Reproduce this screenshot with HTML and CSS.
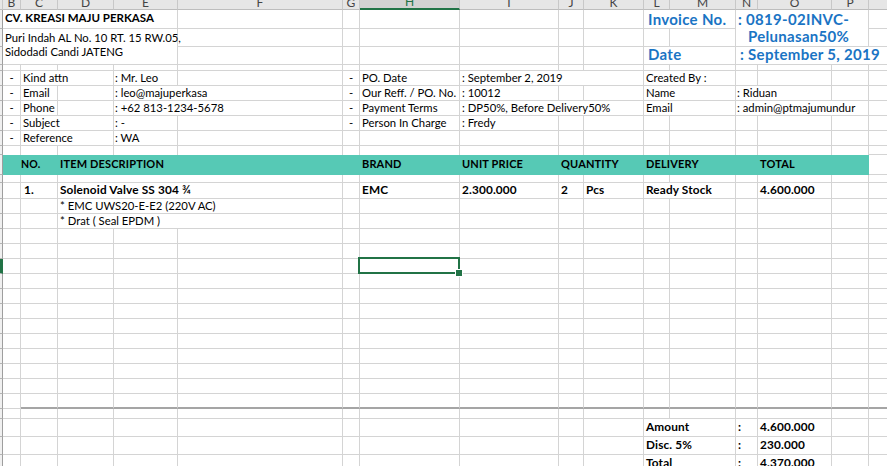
FILE: index.html
```html
<!DOCTYPE html>
<html>
<head>
<meta charset="utf-8">
<link rel="stylesheet" href="styles.css">
</head>
<body>
<div class="sheet">
  <!-- column headers -->
  <i class="h"></i><i class="h">B</i><i class="h">C</i><i class="h">D</i><i class="h">E</i><i class="h">F</i><i class="h">G</i><i class="h hs">H</i><i class="h">I</i><i class="h">J</i><i class="h">K</i><i class="h">L</i><i class="h">M</i><i class="h">N</i><i class="h">O</i><i class="h">P</i><i class="h">Q</i>

  <!-- row 1 -->
  <i class="rh"></i><div class="s4 b co">CV. KREASI MAJU PERKASA</div><i></i><i></i><i></i><i></i><i></i><i></i><div class="s2 bl inv">Invoice No.</div><div class="s3 r2 bl invno"><span>: 0819-02INVC-</span><span class="ind">Pelunasan50%</span></div><i></i>
  <!-- row 2 -->
  <i class="rh"></i><div class="s4 r2 addr"><span>Puri Indah AL No. 10 RT. 15 RW.05,</span><span>Sidodadi Candi JATENG</span></div><i></i><i></i><i></i><i></i><i></i><i></i><i></i><i></i><i></i>
  <!-- row 3 -->
  <i class="rh"></i><i></i><i></i><i></i><i></i><i></i><i></i><div class="s2 bl dt">Date</div><div class="s4 bl dt">: September 5, 2019</div>
  <!-- row 4 -->
  <i class="rh"></i><i></i><i></i><i></i><i></i><i></i><i></i><i></i><i></i><i></i><i></i><i></i><i></i><i></i><i></i><i></i><i></i>
  <!-- row 5 -->
  <i class="rh"></i><div class="c">-</div><div class="s2">Kind attn</div><div class="p1">: Mr. Leo</div><i></i><div class="c">-</div><div>PO. Date</div><div class="s3">: September 2, 2019</div><div class="s2">Created By :</div><i></i><i></i><i></i><i></i>
  <!-- row 6 -->
  <i class="rh"></i><div class="c">-</div><div>Email</div><i></i><div class="s2 p1">: leo@majuperkasa</div><div class="c">-</div><div>Our Reff. / PO. No.</div><div>: 10012</div><i></i><i></i><div class="s2">Name</div><div class="s2 p1">: Riduan</div><i></i><i></i>
  <!-- row 7 -->
  <i class="rh"></i><div class="c">-</div><div>Phone</div><i></i><div class="s2 p1">: +62 813-1234-5678</div><div class="c">-</div><div>Payment Terms</div><div class="s3">: DP50%, Before Delivery50%</div><div class="s2">Email</div><div class="s3 p1">: admin@ptmajumundur</div><i></i>
  <!-- row 8 -->
  <i class="rh"></i><div class="c">-</div><div class="s2">Subject</div><div class="p1">: -</div><i></i><div class="c">-</div><div>Person In Charge</div><div>: Fredy</div><i></i><i></i><i></i><i></i><i></i><i></i><i></i><i></i>
  <!-- row 9 -->
  <i class="rh"></i><div class="c">-</div><div class="s2">Reference</div><div class="p1">: WA</div><i></i><i></i><i></i><i></i><i></i><i></i><i></i><i></i><i></i><i></i><i></i><i></i>
  <!-- row 10 -->
  <i class="rh"></i><i class="nb"></i><i class="nb"></i><i class="nb"></i><i class="nb"></i><i class="nb"></i><i class="nb"></i><i class="nb"></i><i class="nb"></i><i class="nb"></i><i class="nb"></i><i class="nb"></i><i class="nb"></i><i class="nb"></i><i class="nb"></i><i class="nb"></i><i></i>
  <!-- row 11 : table header -->
  <i class="rh"></i><i class="t"></i><div class="t no">NO.</div><div class="t s4">ITEM DESCRIPTION</div><div class="t">BRAND</div><div class="t">UNIT PRICE</div><div class="t s2">QUANTITY</div><div class="t s3">DELIVERY</div><div class="t s2">TOTAL</div><i></i>
  <!-- row 12 -->
  <i class="rh"></i><i></i><i></i><i class="s3"></i><i></i><i></i><i></i><i></i><i></i><i></i><i></i><i></i><i></i><i></i><i></i>
  <!-- row 13 : item -->
  <i class="rh"></i><i></i><div class="b it p3">1.</div><div class="s3 b it">Solenoid Valve SS 304 ¾</div><i></i><div class="b it">EMC</div><div class="b it">2.300.000</div><div class="b it">2</div><div class="b it">Pcs</div><div class="s2 b it">Ready Stock</div><i></i><div class="b it">4.600.000</div><i></i><i></i>
  <!-- row 14 -->
  <i class="rh"></i><i></i><i></i><div class="s3">* EMC UWS20-E-E2 (220V AC)</div><i></i><i></i><i></i><i></i><i></i><i></i><i></i><i></i><i></i><i></i><i></i>
  <!-- row 15 -->
  <i class="rh"></i><i></i><i></i><div class="s3">* Drat ( Seal EPDM )</div><i></i><i></i><i></i><i></i><i></i><i></i><i></i><i></i><i></i><i></i><i></i>
  <!-- row 16 -->
  <i class="rh"></i><i></i><i></i><i></i><i></i><i></i><i></i><i></i><i></i><i></i><i></i><i></i><i></i><i></i><i></i><i></i><i></i>
  <!-- row 17 -->
  <i class="rh"></i><i></i><i></i><i></i><i></i><i></i><i></i><i></i><i></i><i></i><i></i><i></i><i></i><i></i><i></i><i></i><i></i>
  <!-- row 18 : selected cell H -->
  <i class="rh rs"></i><i></i><i></i><i></i><i></i><i></i><i></i><i class="sel"></i><i></i><i></i><i></i><i></i><i></i><i></i><i></i><i></i><i></i>
  <!-- rows 19-26 -->
  <i class="rh"></i><i></i><i></i><i></i><i></i><i></i><i></i><i></i><i></i><i></i><i></i><i></i><i></i><i></i><i></i><i></i><i></i>
  <i class="rh"></i><i></i><i></i><i></i><i></i><i></i><i></i><i></i><i></i><i></i><i></i><i></i><i></i><i></i><i></i><i></i><i></i>
  <i class="rh"></i><i></i><i></i><i></i><i></i><i></i><i></i><i></i><i></i><i></i><i></i><i></i><i></i><i></i><i></i><i></i><i></i>
  <i class="rh"></i><i></i><i></i><i></i><i></i><i></i><i></i><i></i><i></i><i></i><i></i><i></i><i></i><i></i><i></i><i></i><i></i>
  <i class="rh"></i><i></i><i></i><i></i><i></i><i></i><i></i><i></i><i></i><i></i><i></i><i></i><i></i><i></i><i></i><i></i><i></i>
  <i class="rh"></i><i></i><i></i><i></i><i></i><i></i><i></i><i></i><i></i><i></i><i></i><i></i><i></i><i></i><i></i><i></i><i></i>
  <i class="rh"></i><i></i><i></i><i></i><i></i><i></i><i></i><i></i><i></i><i></i><i></i><i></i><i></i><i></i><i></i><i></i><i></i>
  <i class="rh"></i><i></i><i></i><i></i><i></i><i></i><i></i><i></i><i></i><i></i><i></i><i></i><i></i><i></i><i></i><i></i><i></i>
  <!-- row 27 : thick bottom -->
  <i class="rh"></i><i></i><i class="tk"></i><i class="tk"></i><i class="tk"></i><i class="tk"></i><i class="tk"></i><i class="tk"></i><i class="tk"></i><i class="tk"></i><i class="tk"></i><i class="tk"></i><i class="tk"></i><i class="tk"></i><i class="tk"></i><i class="tk"></i><i class="tk"></i>
  <!-- row 28 -->
  <i class="rh"></i><i></i><i></i><i></i><i></i><i></i><i></i><i></i><i></i><i></i><i></i><i></i><i></i><i></i><i></i><i></i><i></i>
  <!-- totals -->
  <i class="rh"></i><i></i><i></i><i></i><i></i><i></i><i></i><i></i><i></i><i></i><i></i><div class="s2 b tt">Amount</div><div class="b tt">:</div><div class="b tt">4.600.000</div><i></i><i></i>
  <i class="rh"></i><i></i><i></i><i></i><i></i><i></i><i></i><i></i><i></i><i></i><i></i><div class="s2 b tt">Disc. 5%</div><div class="b tt">:</div><div class="b tt">230.000</div><i></i><i></i>
  <i class="rh"></i><i></i><i></i><i></i><i></i><i></i><i></i><i></i><i></i><i></i><i></i><div class="s2 b tt">Total</div><div class="b tt">:</div><div class="b tt">4.370.000</div><i></i><i></i>
</div>
</body>
</html>
```

FILE: styles.css
```css
* { box-sizing: border-box; margin: 0; padding: 0; }
html, body { width: 887px; height: 466px; overflow: hidden; background: #fff; }
body {
  font-family: Lato, "Liberation Sans", sans-serif;
  font-size: 11.3px;
  color: #000;
}
.sheet {
  display: grid;
  grid-template-columns: 3px 18px 37px 56px 64px 165px 17px 100px 99px 25px 60px 26px 66px 22px 74px 37px 60px;
  grid-template-rows: 10px 19px 18px 18px 6px repeat(5, 15px) 9px 20px 8px 16px repeat(14, 15px) 10px repeat(3, 18px);
}
.sheet > * {
  display: flex;
  align-items: flex-end;
  white-space: nowrap;
  line-height: 14px;
  padding-left: 2px;
  min-width: 0;
  font-style: normal;
  border-right: 1px solid #d4d4d4;
  border-bottom: 1px solid #d4d4d4;
}
.s2 { grid-column: span 2; }
.s3 { grid-column: span 3; }
.s4 { grid-column: span 4; }
.r2 { grid-row: span 2; }
.b { font-weight: 700; font-size: 11.8px; letter-spacing: 0.15px; }
.c { justify-content: center; padding-left: 0; }
.p1 { padding-left: 1px; }
.p3 { padding-left: 3px; }

/* column header */
.h {
  background: #e6e6e6;
  border-right: 1px solid #c8c8c8;
  border-bottom: 1px solid #bdbdbd;
  justify-content: center;
  padding-left: 0;
  font-size: 12px;
  line-height: 13px;
  color: #444;
  overflow: hidden;
}
.hs {
  background: #d2d2d2;
  color: #217346;
  border-bottom: 2px solid #217346;
}

/* row header strip */
.sheet > .rh {
  padding: 0;
  background: #f0f0f0;
  border-right: 1px solid #9e9e9e;
  border-bottom: 1px solid #b4b4b4;
}
.sheet > .rs { border-right: 2px solid #217346; background: #217346; }

/* title block */
.sheet > .co { padding-bottom: 3px; font-size: 11.5px; letter-spacing: 0; }
.addr { flex-direction: column; align-items: flex-start; justify-content: flex-end; padding-bottom: 5px; }
.bl { color: #1a74c4; font-weight: 700; font-size: 15px; letter-spacing: 0.3px; }
.inv { line-height: 18px; padding-left: 4px; }
.invno { flex-direction: column; align-items: flex-start; justify-content: flex-end; line-height: 17px; padding-bottom: 1px; }
.ind { padding-left: 10px; }
.dt { line-height: 18px; padding-bottom: 1px; padding-left: 4px; }

/* table header */
.sheet > .t {
  background: #56c9b5;
  border-color: transparent;
  font-weight: 700;
  font-size: 11px;
  letter-spacing: 0.15px;
  padding-bottom: 3px;
}
.sheet > .no { padding-left: 0; font-size: 10.5px; }
.sheet > .nb { border-bottom: none; }

.it { padding-bottom: 1px; }
.tt { padding-bottom: 1px; line-height: 16px; }

.sheet > .tk { border-bottom: 2px solid #a5a5a5; }

/* selected cell */
.sel { position: relative; }
.sel::before {
  content: "";
  position: absolute;
  top: -2px; left: -2px; right: -1px; bottom: -1px;
  border: 2px solid #217346;
}
.sel::after {
  content: "";
  position: absolute;
  right: -4px; bottom: -4px;
  width: 6px; height: 6px;
  background: #217346;
  border: 1px solid #fff;
}
```
